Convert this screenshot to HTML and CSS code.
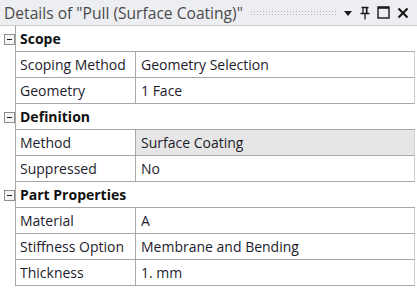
FILE: index.html
```html
<!DOCTYPE html>
<html lang="en">
<head>
    <meta charset="UTF-8">
    <title>Details of "Pull (Surface Coating)"</title>
    <link rel="stylesheet" href="styles.css">
</head>
<body>
    <div id="panel">
        <div class="titlebar">
            <span class="title">Details of "Pull (Surface Coating)"</span>
            <span class="grip"></span>
            <span class="tools">
                <svg class="tool" width="10" height="8" viewBox="0 0 10 8"><path d="M1 2h8L5 7z" fill="#1a1a1a"/></svg>
                <svg class="tool" width="10" height="14" viewBox="0 0 10 14"><path d="M1.5 1.5h7M3 1.5v6M6.5 1.5v6M0.5 7.5h9M5 7.5v6" stroke="#1a1a1a" stroke-width="1.3" fill="none"/><path d="M6 1.5h1.5v6H6z" fill="#1a1a1a"/></svg>
                <svg class="tool" width="13" height="13" viewBox="0 0 13 13"><rect x="1" y="1" width="11" height="11" stroke="#1a1a1a" stroke-width="1.4" fill="none"/><path d="M1 1.8h11" stroke="#1a1a1a" stroke-width="2"/></svg>
                <svg class="tool" width="12" height="12" viewBox="0 0 12 12"><path d="M1.5 1.5l9 9M10.5 1.5l-9 9" stroke="#1a1a1a" stroke-width="2.2"/></svg>
            </span>
        </div>

        <div class="grid">
            <div class="gutter"><span class="toggle"></span></div>
            <div class="group-name">Scope</div>
            <div class="gutter"></div>
            <div class="label">Scoping Method</div>
            <div class="value">Geometry Selection</div>
            <div class="gutter"></div>
            <div class="label">Geometry</div>
            <div class="value">1 Face</div>

            <div class="gutter"><span class="toggle"></span></div>
            <div class="group-name">Definition</div>
            <div class="gutter"></div>
            <div class="label">Method</div>
            <div class="value selected">Surface Coating</div>
            <div class="gutter"></div>
            <div class="label">Suppressed</div>
            <div class="value">No</div>

            <div class="gutter"><span class="toggle"></span></div>
            <div class="group-name">Part Properties</div>
            <div class="gutter"></div>
            <div class="label">Material</div>
            <div class="value">A</div>
            <div class="gutter"></div>
            <div class="label">Stiffness Option</div>
            <div class="value">Membrane and Bending</div>
            <div class="gutter"></div>
            <div class="label">Thickness</div>
            <div class="value">1. mm</div>
        </div>
    </div>
</body>
</html>
```

FILE: styles.css
```css
body {
    margin: 0;
    background-color: #fff;
    font-family: "Open Sans", "Noto Sans", sans-serif;
    font-size: 14px;
    color: #1c1c2c;
}

#panel {
    width: 417px;
    height: 297px;
    background-color: #fff;
}

.titlebar {
    display: flex;
    align-items: center;
    height: 25px;
    padding: 0 8px 0 4px;
    background-color: #eceef2;
    border-bottom: 1px solid #c9cbd0;
}

.title {
    font-size: 15.6px;
    color: #4a4a4a;
    white-space: nowrap;
}

.grip {
    flex: 1;
    height: 5px;
    margin: 0 6px 0 7px;
    background-image: radial-gradient(#b4b6bb 0.9px, transparent 1px);
    background-size: 3px 3px;
}

.tools {
    display: flex;
    align-items: center;
    gap: 7px;
}

.grid {
    display: grid;
    grid-template-columns: 16px 120px 279px;
    grid-auto-rows: 26px;
}

.gutter {
    border-right: 1px solid #a8a8a8;
    display: flex;
    align-items: center;
    justify-content: flex-start;
    padding-left: 4px;
}

.toggle {
    position: relative;
    width: 9px;
    height: 9px;
    border: 1px solid #8e8e8e;
    background-color: #f4f4f4;
}

.toggle::after {
    content: "";
    position: absolute;
    left: 2px;
    top: 4px;
    width: 5px;
    height: 1px;
    background-color: #1a1a1a;
}

.group-name,
.label,
.value {
    display: flex;
    align-items: center;
    border-bottom: 1px solid #a8a8a8;
    white-space: nowrap;
}

.group-name {
    grid-column: span 2;
    font-weight: bold;
    padding-left: 4px;
    color: #111;
}

.label {
    padding-left: 4px;
    border-right: 1px solid #a8a8a8;
}

.value {
    padding-left: 5px;
    border-right: 1px solid #d0d0d0;
}

.selected {
    background-color: #e6e6e6;
}
```
